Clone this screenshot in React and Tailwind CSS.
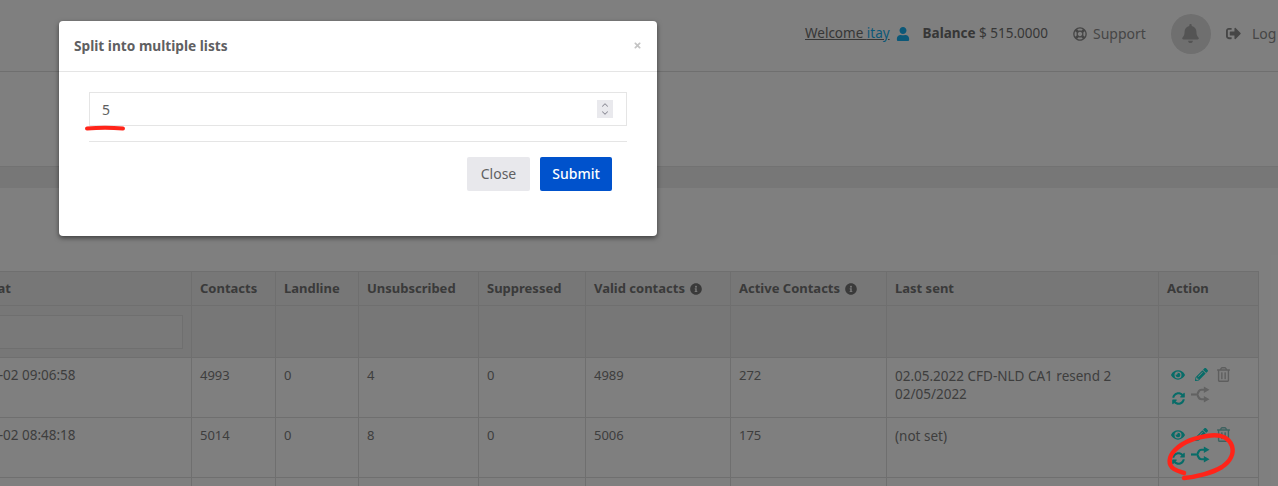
import React from 'react';
import {
  FaBell,
  FaEye,
  FaInfoCircle,
  FaPencilAlt,
  FaRegLifeRing,
  FaRegTrashAlt,
  FaSignOutAlt,
  FaSyncAlt,
  FaTimes,
  FaUser,
} from 'react-icons/fa';
import { ChevronDown, ChevronUp } from 'lucide-react';

const columns = [
  { label: 'Created at', width: 'w-[254px]' },
  { label: 'Contacts', width: 'w-[84px]' },
  { label: 'Landline', width: 'w-[83px]' },
  { label: 'Unsubscribed', width: 'w-[120px]' },
  { label: 'Suppressed', width: 'w-[107px]' },
  { label: 'Valid contacts', width: 'w-[145px]', info: true },
  { label: 'Active Contacts', width: 'w-[156px]', info: true },
  { label: 'Last sent', width: 'w-[272px]' },
  { label: 'Action', width: 'w-[100px]' },
];

const rows = [
  {
    cells: ['2022-05-02 09:06:58', '4993', '0', '4', '0', '4989', '272', '02.05.2022 CFD-NLD CA1 resend 2 02/05/2022'],
    splitColor: 'text-[#c4c4c4]',
    trashColor: 'text-[#bdbdbd]',
  },
  {
    cells: ['2022-05-02 08:48:18', '5014', '0', '8', '0', '5006', '175', '(not set)'],
    splitColor: 'text-[#10d8d0]',
    trashColor: 'text-[#7cc4c0]',
  },
];

function cellClass(i) {
  if (i === 0) return 'pl-[10px] pr-[8px] pt-[8px] text-[13.5px]';
  if (i === 7) return 'px-[8px] pt-[9px] text-[13.5px] leading-[18px]';
  return 'px-[8px] pt-[8px]';
}

function SplitIcon({ className }) {
  return (
    <svg viewBox="0 0 20 17" className={className} fill="none" stroke="currentColor" strokeWidth="2.3">
      <path d="M0 8.5h5.5" />
      <path d="M15 3.500h-4c-2 0-3 1.500-3.500 3l-1 2 1 2c.5 1.500 1.500 3 3.500 3h4" />
      <path d="M13.500 0l6 3.500-6 3.500zM13.500 10l6 3.500-6 3.500z" fill="currentColor" stroke="none" />
    </svg>
  );
}

function Actions({ splitColor, trashColor }) {
  return (
    <div className="flex w-[62px] flex-wrap items-start text-[#10d8d0]">
      <div className="flex w-full items-center gap-[10px]">
        <FaEye size={14} />
        <FaPencilAlt size={13} />
        <FaRegTrashAlt size={15} className={`ml-[-2px] ${trashColor}`} />
      </div>
      <div className="mt-[4px] flex w-full items-end gap-[6px]">
        <FaSyncAlt size={13} className="mb-[-2px] ml-[1px]" />
        <SplitIcon className={`h-[17px] w-[19px] ${splitColor}`} />
      </div>
    </div>
  );
}

export default function App() {
  return (
    <div className="relative h-screen w-full overflow-hidden bg-white font-['Noto_Sans',sans-serif] text-[13px] leading-[19.5px] text-[#7c7c7c]">
      <header className="flex h-[72px] items-center whitespace-nowrap border-b border-[#dedede] pb-[4px] pl-[805px] text-[13.5px] text-[#6e6e6e]">
        <a className="flex items-center underline">
          Welcome&nbsp;<span className="text-[#18b0f0]">itay</span>
          <FaUser size={14} className="ml-[6px] mr-[2px] text-[#18b0f0]" />
        </a>
        <span className="ml-[11px]"><b>Balance</b> $ 515.0000</span>
        <span className="ml-[25px] flex items-center gap-[6px] text-[14px] text-[#8c8c8c]">
          <FaRegLifeRing size={14} /> Support
        </span>
        <span className="ml-[25px] flex size-[40px] shrink-0 items-center justify-center rounded-full bg-[#dedede] text-[#a8a8a8]">
          <FaBell size={19} />
        </span>
        <span className="ml-[15px] flex items-center gap-[11px] text-[14px] text-[#8c8c8c]">
          <FaSignOutAlt size={15} /> Log out
        </span>
      </header>

      <div className="mt-[94px] h-[22px] border-t border-[#e4e4e4] bg-[#eeeeee]" />

      <table className="ml-[-63px] mt-[83px] w-[1321px] table-fixed border-collapse">
        <thead>
          <tr className="h-[34px] bg-[#eeeeee] text-left">
            {columns.map((col, i) => (
              <th
                key={col.label}
                className={`${col.width} ${i === 0 ? 'pl-[5px]' : 'pl-[8px]'} whitespace-nowrap border border-[#dedede] pr-[8px] font-bold text-[#747474]`}
              >
                <span className="inline-flex items-center gap-[5px]">
                  {col.label}
                  {col.info && <FaInfoCircle size={12} />}
                </span>
              </th>
            ))}
          </tr>
          <tr className="h-[52px] bg-[#eeeeee]">
            <td className="border border-[#dedede] px-[8px]">
              <input className="block h-[34px] w-full border border-[#dedede] bg-[#f2f2f2]" readOnly />
            </td>
            {columns.slice(1).map((col) => (
              <td key={col.label} className="border border-[#dedede]" />
            ))}
          </tr>
        </thead>
        <tbody>
          {rows.map((row) => (
            <tr key={row.cells[0]} className="h-[60px] align-top">
              {row.cells.map((cell, i) => (
                <td key={i} className={`${cellClass(i)} border border-[#dedede]`}>
                  {cell}
                </td>
              ))}
              <td className="border border-[#dedede] px-[12px] pt-[9px]">
                <Actions splitColor={row.splitColor} trashColor={row.trashColor} />
              </td>
            </tr>
          ))}
          <tr className="h-[60px]">
            {columns.map((col) => (
              <td key={col.label} className="border border-[#dedede]" />
            ))}
          </tr>
        </tbody>
      </table>

      <div className="absolute inset-0 bg-black/50 pl-[59px] pt-[21px]">
        <div className="h-[215px] w-[598px] rounded-[4px] bg-white shadow-[0_2px_5px_rgba(0,0,0,0.5)]">
          <div className="flex h-[51px] items-center justify-between border-b border-[#e5e5e5] px-[15px]">
            <h4 className="text-[13.7px] font-bold text-[#5f6062]">Split into multiple lists</h4>
            <FaTimes size={9} className="mb-[2px] text-[#c4c4c4]" />
          </div>
          <div className="px-[30px] pt-[20px]">
            <div className="relative">
              <input
                type="text"
                value="5"
                readOnly
                className="block h-[34px] w-full border border-[#e5e5e5] px-[12px] text-[14px] text-[#5e5e5e] outline-none"
              />
              <div className="absolute right-[14px] top-[8px] flex h-[18px] w-[16px] flex-col items-center justify-center bg-[#e9e9ed] text-[#8c8c96]">
                <ChevronUp size={10} strokeWidth={2.5} className="mb-[-1px]" />
                <ChevronDown size={10} strokeWidth={2.5} className="mt-[-1px]" />
              </div>
            </div>
            <div className="mt-[15px] flex justify-end gap-[10px] border-t border-[#e5e5e5] pr-[15px] pt-[15px] text-[14px]">
              <button className="h-[34px] w-[63px] rounded-[2px] bg-[#e8e8ec] text-[#5f6062]">Close</button>
              <button className="h-[34px] w-[72px] rounded-[2px] bg-[#0052cc] font-medium text-white">Submit</button>
            </div>
          </div>
        </div>
      </div>

      {/* red marks drawn on top of the screenshot */}
      <svg className="pointer-events-none absolute inset-0 h-full w-full" fill="none" stroke="#ff2419" strokeLinecap="round">
        <path d="M87 128.500C98 127.500 112 127.500 123 128.500" strokeWidth="4" />
        <path
          d="M1184 478C1196 477 1212 473 1222 467C1231 461 1234 453 1232 446C1229 438 1221 434.500 1211 435.500C1197 437 1184 441 1175 450C1168 457 1168 465 1174 469C1177 471 1181 472 1184 473"
          strokeWidth="4.500"
        />
      </svg>
    </div>
  );
}
